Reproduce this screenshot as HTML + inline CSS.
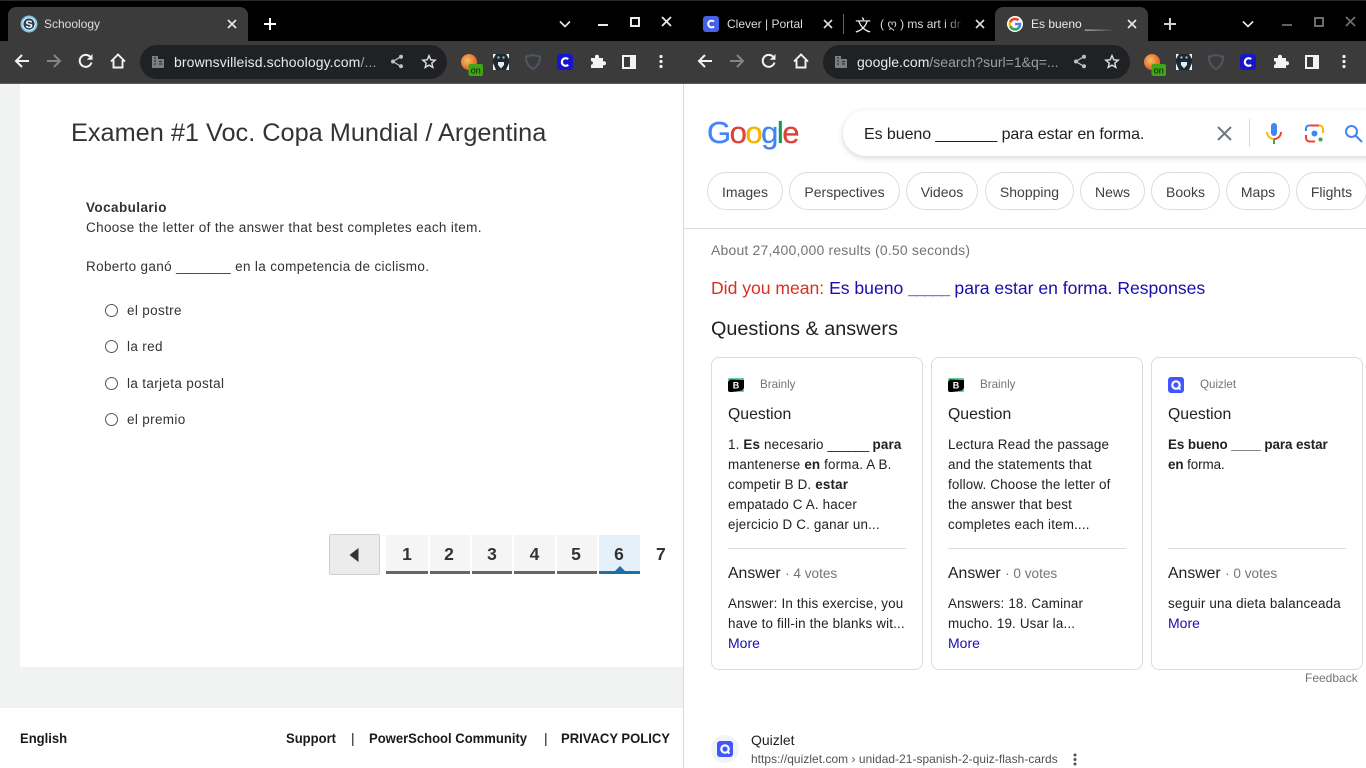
<!DOCTYPE html>
<html><head><meta charset="utf-8"><title>Schoology</title>
<style>
html,body{margin:0;padding:0;width:1366px;height:768px;overflow:hidden;background:#fff;font-family:"Liberation Sans",sans-serif}
.a{position:absolute;white-space:nowrap}
.box{position:absolute}
svg{position:absolute;overflow:visible}
.tt{color:#dadce0;font-size:12px;line-height:16px}
.url{font-size:14px;line-height:18px;color:#9aa0a6}
.nb{position:absolute;top:535px;height:36px;background:#f5f5f5;font:bold 17.5px/38px "Liberation Sans",sans-serif;color:#333;text-align:center;border-bottom:3px solid #666}
.chip{position:absolute;top:172px;height:38px;border:1px solid #dadce0;border-radius:20px;box-sizing:border-box;font-size:14px;line-height:38px;text-align:center;color:#3c4043;background:#fff}
.card{position:absolute;top:357px;height:313px;width:212px;border:1px solid #dadce0;border-radius:8px;box-sizing:border-box;background:#fff}
.ct{font-size:13.4px;line-height:20px;color:#202124;letter-spacing:.17px}
.q{font-size:15.8px;line-height:20px;color:#202124}
.v{font-size:13.6px;color:#70757a}
.m{color:#1a0dab;font-size:14px;letter-spacing:0;position:relative;top:-1px}
.u{letter-spacing:-.6px}
.rad{position:absolute;left:105px;width:11px;height:11px;border:1px solid #555;border-radius:50%;background:#fff}
.opt{font-size:13.5px;line-height:18px;color:#333;left:127px;letter-spacing:.34px}
.ft{font-weight:bold;font-size:14px;line-height:18px;color:#1a1a1a;top:729px;transform-origin:left center;transform:scaleX(.932)}
</style></head><body>

<!-- ================ LEFT CHROME ================ -->
<div class="box" style="left:0;top:0;width:684px;height:41px;background:#000"></div>
<div class="box" style="left:0;top:0;width:1366px;height:1px;background:#2a2a2a"></div>
<div class="box" style="left:0;top:41px;width:684px;height:42px;background:#3b3b3b"></div>
<div class="box" style="left:0;top:83px;width:684px;height:1px;background:#5c5c5c"></div>
<div class="box" style="left:8px;top:7px;width:240px;height:34px;background:#3b3b3b;border-radius:8px 8px 0 0"></div>
<svg style="left:20px;top:15px" width="18" height="18" viewBox="0 0 18 18"><circle cx="9" cy="9" r="7.5" fill="#fff" stroke="#7cc5e8" stroke-width="2"/><circle cx="9" cy="9" r="5.6" fill="#2c3e50"/><text x="9" y="13" font-family="Liberation Sans" font-size="11" font-weight="bold" fill="#fff" text-anchor="middle">S</text></svg>
<div class="a tt" style="left:44px;top:16px">Schoology</div>
<svg style="left:227px;top:19px" width="10" height="10"><path d="M1 1L9 9M9 1L1 9" stroke="#e8eaed" stroke-width="1.6"/></svg>
<svg style="left:263px;top:17px" width="14" height="14"><path d="M7 1V13M1 7H13" stroke="#fff" stroke-width="2"/></svg>
<svg style="left:559px;top:20px" width="12" height="8"><path d="M1 1.5L6 6.5L11 1.5" fill="none" stroke="#e8eaed" stroke-width="1.6"/></svg>
<div class="box" style="left:598px;top:24px;width:10px;height:2px;background:#e8eaed"></div>
<div class="box" style="left:630px;top:17px;width:6px;height:6px;border:2px solid #e8eaed"></div>
<svg style="left:661px;top:16px" width="11" height="11"><path d="M1 1L10 10M10 1L1 10" stroke="#e8eaed" stroke-width="1.8"/></svg>

<svg style="left:14px;top:53px" width="16" height="16" viewBox="0 0 16 16"><path d="M15 8H2M8 2L2 8L8 14" fill="none" stroke="#f1f3f4" stroke-width="2"/></svg>
<svg style="left:46px;top:53px" width="16" height="16" viewBox="0 0 16 16"><path d="M1 8H14M8 2L14 8L8 14" fill="none" stroke="#80868b" stroke-width="2"/></svg>
<svg style="left:78px;top:53px" width="16" height="16" viewBox="0 0 16 16"><path d="M13.5 9.5A6 6 0 1 1 12 3.6" fill="none" stroke="#f1f3f4" stroke-width="2"/><path d="M14.5 1V6.8H8.8Z" fill="#f1f3f4"/></svg>
<svg style="left:110px;top:53px" width="16" height="16" viewBox="0 0 16 16"><path d="M1 8.5L8 1.5L15 8.5M3.5 7V14.5H12.5V7" fill="none" stroke="#f1f3f4" stroke-width="1.9"/></svg>

<div class="box" style="left:140px;top:45px;width:307px;height:34px;border-radius:17px;background:#202124"></div>
<svg style="left:151px;top:55px" width="14" height="14" viewBox="0 0 14 14"><path d="M1 1H7V4H13V13H1Z" fill="#9aa0a6" opacity=".75"/><path d="M3 3H5M3 6H5M3 9H5M8 6.5H11M8 9H11" stroke="#303134" stroke-width="1.3"/></svg>
<div class="a url" style="left:174px;top:53px;color:#e8eaed;letter-spacing:.11px">brownsvilleisd.schoology.com<span style="color:#9aa0a6">/...</span></div>
<svg style="left:390px;top:54px" width="14" height="15" viewBox="0 0 14 15"><path d="M11 2.5L3 7.5L11 12.5" fill="none" stroke="#bdc1c6" stroke-width="1.3"/><circle cx="11" cy="2.7" r="2" fill="#bdc1c6"/><circle cx="3" cy="7.5" r="2" fill="#bdc1c6"/><circle cx="11" cy="12.3" r="2" fill="#bdc1c6"/></svg>
<svg style="left:421px;top:54px" width="16" height="15" viewBox="0 0 16 15"><path d="M8 1.6L9.8 5.8L14.2 6.2L10.8 9.1L11.8 13.4L8 11.1L4.2 13.4L5.2 9.1L1.8 6.2L6.2 5.8Z" fill="none" stroke="#e0e0e0" stroke-width="1.4"/></svg>

<svg style="left:461px;top:54px" width="24" height="22" viewBox="0 0 24 22"><defs><radialGradient id="o1" cx=".4" cy=".4"><stop offset="0" stop-color="#f8c060"/><stop offset="1" stop-color="#e27030"/></radialGradient></defs><circle cx="8" cy="8" r="8" fill="url(#o1)"/><rect x="7.5" y="10" width="14.5" height="12" rx="2" fill="#3fa614"/><text x="14.7" y="19.5" font-family="Liberation Sans" font-size="9" fill="#111" text-anchor="middle">on</text></svg>
<svg style="left:493px;top:54px" width="16" height="16" viewBox="0 0 16 16"><rect width="16" height="16" fill="#1c2a33"/><path d="M0 0H3L0 5ZM16 0H13L16 5ZM0 9L3 16H0ZM16 9L13 16H16Z" fill="#ecf0f1"/><circle cx="5.5" cy="3.5" r="1.2" fill="#9fb0b8"/><circle cx="10.5" cy="3.5" r="1.2" fill="#9fb0b8"/><path d="M5 8H11V11L8 14.5L5 11Z" fill="#e8ecee"/></svg>
<svg style="left:525px;top:54px" width="16" height="16" viewBox="0 0 16 16"><path d="M1 2.5L8 1L15 2.5C15 9 12 13 8 15C4 13 1 9 1 2.5Z" fill="none" stroke="#4e5663" stroke-width="2"/></svg>
<svg style="left:557px;top:54px" width="16" height="16" viewBox="0 0 16 16"><rect width="16" height="16" rx="3" fill="#1616cc"/><path d="M11.2 5.2A3.8 3.8 0 1 0 11.2 10.8" fill="none" stroke="#fff" stroke-width="2.2"/></svg>
<svg style="left:590px;top:54px" width="15" height="15" viewBox="0 0 15 15"><path d="M1 4H5V2.8A2 2 0 0 1 9 2.8V4H13V7.2H14A2 2 0 0 1 14 11.2H13V14H1V10.6H2A2 2 0 0 0 2 7.2H1Z" fill="#f1f3f4"/></svg>
<svg style="left:622px;top:55px" width="14" height="14" viewBox="0 0 14 14"><rect width="14" height="14" fill="#f1f3f4"/><rect x="2" y="2" width="6" height="10" fill="#3b3b3b"/></svg>
<svg style="left:659px;top:54px" width="4" height="15"><circle cx="2" cy="2.5" r="1.6" fill="#f1f3f4"/><circle cx="2" cy="7.5" r="1.6" fill="#f1f3f4"/><circle cx="2" cy="12.5" r="1.6" fill="#f1f3f4"/></svg>

<!-- ================ LEFT PAGE ================ -->
<div class="box" style="left:0;top:84px;width:683px;height:624px;background:#f1f3f2"></div>
<div class="box" style="left:20px;top:84px;width:663px;height:583px;background:#fff"></div>
<div class="box" style="left:0;top:708px;width:683px;height:60px;background:#fff"></div>
<div class="box" style="left:683px;top:84px;width:1px;height:684px;background:#d8d8d8"></div>

<div class="a" style="left:71px;top:117px;font-size:25.3px;line-height:32px;color:#333">Examen #1 Voc. Copa Mundial / Argentina</div>
<div class="a" style="left:86px;top:199px;font-size:13.5px;line-height:17px;font-weight:bold;color:#333;letter-spacing:.42px">Vocabulario</div>
<div class="a" style="left:86px;top:219px;font-size:13.5px;line-height:17px;color:#333;letter-spacing:.345px">Choose the letter of the answer that best completes each item.</div>
<div class="a" style="left:86px;top:258px;font-size:13.5px;line-height:17px;color:#333;letter-spacing:.345px">Roberto ganó _______ en la competencia de ciclismo.</div>
<div class="rad" style="top:304px"></div><div class="a opt" style="top:302px">el postre</div>
<div class="rad" style="top:340px"></div><div class="a opt" style="top:338px">la red</div>
<div class="rad" style="top:377px"></div><div class="a opt" style="top:375px">la tarjeta postal</div>
<div class="rad" style="top:413px"></div><div class="a opt" style="top:411px">el premio</div>

<div class="box" style="left:329px;top:534px;width:49px;height:39px;background:#ececec;border:1px solid #cfcfcf;border-radius:2px"></div>
<svg style="left:349px;top:548px" width="10" height="14"><path d="M9.5 0V14L0.5 7Z" fill="#333"/></svg>
<div class="nb" style="left:386px;width:42px">1</div>
<div class="nb" style="left:430px;width:40px;text-indent:-2px">2</div>
<div class="nb" style="left:472px;width:40px">3</div>
<div class="nb" style="left:514px;width:41px">4</div>
<div class="nb" style="left:557px;width:40px;text-indent:-2px">5</div>
<div class="nb" style="left:599px;width:41px;background:#e4f1fb;border-bottom-color:#1f6fa5;text-indent:-1px">6</div>
<svg style="left:614px;top:566px" width="12" height="6"><path d="M0 6L6 0L12 6Z" fill="#1f6fa5"/></svg>
<div class="a" style="left:656px;top:545px;font:bold 17.5px/19px 'Liberation Sans',sans-serif;color:#333">7</div>

<div class="a ft" style="left:20px">English</div>
<div class="a ft" style="left:286px">Support</div>
<div class="a" style="left:351px;top:729px;font-size:14px;line-height:18px;color:#1a1a1a">|</div>
<div class="a ft" style="left:369px">PowerSchool Community</div>
<div class="a" style="left:544px;top:729px;font-size:14px;line-height:18px;color:#1a1a1a">|</div>
<div class="a ft" style="left:561px">PRIVACY POLICY</div>

<!-- ================ RIGHT CHROME ================ -->
<div class="box" style="left:684px;top:1px;width:682px;height:40px;background:#000"></div>
<div class="box" style="left:684px;top:41px;width:682px;height:42px;background:#3b3b3b"></div>
<div class="box" style="left:684px;top:83px;width:682px;height:1px;background:#5c5c5c"></div>
<div class="box" style="left:995px;top:7px;width:153px;height:34px;background:#3b3b3b;border-radius:8px 8px 0 0"></div>

<svg style="left:703px;top:16px" width="16" height="16"><rect width="16" height="16" rx="3" fill="#4661e8"/><path d="M11 5.6A3.4 3.4 0 1 0 11 10.4" fill="none" stroke="#fff" stroke-width="2"/></svg>
<div class="a tt" style="left:727px;top:16px">Clever | Portal</div>
<svg style="left:823px;top:19px" width="10" height="10"><path d="M1 1L9 9M9 1L1 9" stroke="#dadce0" stroke-width="1.6"/></svg>
<div class="box" style="left:843px;top:14px;width:1px;height:20px;background:#5f6368"></div>
<div class="a" style="left:855px;top:14px;font:16px/20px 'Noto Sans CJK SC',sans-serif;color:#f1f3f4">文</div>
<div class="a tt" style="left:880px;top:16px;width:86px;overflow:hidden;-webkit-mask-image:linear-gradient(90deg,#000 75%,transparent)">( ღ ) ms art i dr</div>
<svg style="left:975px;top:19px" width="10" height="10"><path d="M1 1L9 9M9 1L1 9" stroke="#dadce0" stroke-width="1.6"/></svg>

<svg style="left:1007px;top:16px" width="16" height="16" viewBox="0 0 48 48"><circle cx="24" cy="24" r="24" fill="#fff"/><path d="M43 24.4c0-1.4-.1-2.8-.4-4.1H24v7.8h10.7a9 9 0 0 1-4 6v5h6.4c3.7-3.5 5.9-8.6 5.9-14.7z" fill="#4285f4"/><path d="M24 44c5.4 0 9.9-1.8 13.1-4.8l-6.4-5c-1.8 1.2-4 1.9-6.7 1.9-5.1 0-9.5-3.5-11-8.2H6.4v5.1C9.7 39.500 16.300 44 24 44z" fill="#34a853"/><path d="M13 27.900c-.8-2.400-.8-5 0-7.400v-5.100H6.400a20 20 0 0 0 0 17.600z" fill="#fbbc05"/><path d="M24 12.900c2.900 0 5.500 1 7.500 2.900l5.700-5.700C33.900 7 29.400 5 24 5 16.300 5 9.700 9.500 6.400 15.400l6.600 5.100c1.500-4.600 5.900-7.600 11-7.600z" fill="#ea4335"/></svg>
<div class="a tt" style="left:1031px;top:16px;color:#e8eaed;width:84px;overflow:hidden;-webkit-mask-image:linear-gradient(90deg,#000 70%,transparent)">Es bueno _______</div>
<svg style="left:1127px;top:19px" width="10" height="10"><path d="M1 1L9 9M9 1L1 9" stroke="#e8eaed" stroke-width="1.6"/></svg>
<svg style="left:1163px;top:17px" width="14" height="14"><path d="M7 1V13M1 7H13" stroke="#d0d0d0" stroke-width="2"/></svg>
<svg style="left:1242px;top:20px" width="12" height="8"><path d="M1 1.5L6 6.5L11 1.5" fill="none" stroke="#e8eaed" stroke-width="1.6"/></svg>
<div class="box" style="left:1282px;top:24px;width:10px;height:2px;background:#5f6368"></div>
<div class="box" style="left:1314px;top:17px;width:6px;height:6px;border:2px solid #6a6e72"></div>
<svg style="left:1345px;top:16px" width="11" height="11"><path d="M1 1L10 10M10 1L1 10" stroke="#6a6e72" stroke-width="1.8"/></svg>

<svg style="left:697px;top:53px" width="16" height="16" viewBox="0 0 16 16"><path d="M15 8H2M8 2L2 8L8 14" fill="none" stroke="#f1f3f4" stroke-width="2"/></svg>
<svg style="left:729px;top:53px" width="16" height="16" viewBox="0 0 16 16"><path d="M1 8H14M8 2L14 8L8 14" fill="none" stroke="#80868b" stroke-width="2"/></svg>
<svg style="left:761px;top:53px" width="16" height="16" viewBox="0 0 16 16"><path d="M13.5 9.5A6 6 0 1 1 12 3.6" fill="none" stroke="#f1f3f4" stroke-width="2"/><path d="M14.5 1V6.8H8.8Z" fill="#f1f3f4"/></svg>
<svg style="left:793px;top:53px" width="16" height="16" viewBox="0 0 16 16"><path d="M1 8.5L8 1.5L15 8.5M3.5 7V14.5H12.5V7" fill="none" stroke="#f1f3f4" stroke-width="1.9"/></svg>

<div class="box" style="left:823px;top:45px;width:307px;height:34px;border-radius:17px;background:#202124"></div>
<svg style="left:834px;top:55px" width="14" height="14" viewBox="0 0 14 14"><path d="M1 1H7V4H13V13H1Z" fill="#9aa0a6" opacity=".75"/><path d="M3 3H5M3 6H5M3 9H5M8 6.5H11M8 9H11" stroke="#303134" stroke-width="1.3"/></svg>
<div class="a url" style="left:857px;top:53px;color:#e8eaed">google.com<span style="color:#9aa0a6">/search?surl=1&amp;q=...</span></div>
<svg style="left:1073px;top:54px" width="14" height="15" viewBox="0 0 14 15"><path d="M11 2.5L3 7.5L11 12.5" fill="none" stroke="#bdc1c6" stroke-width="1.3"/><circle cx="11" cy="2.7" r="2" fill="#bdc1c6"/><circle cx="3" cy="7.5" r="2" fill="#bdc1c6"/><circle cx="11" cy="12.3" r="2" fill="#bdc1c6"/></svg>
<svg style="left:1104px;top:54px" width="16" height="15" viewBox="0 0 16 15"><path d="M8 1.6L9.8 5.8L14.2 6.2L10.8 9.1L11.8 13.4L8 11.1L4.2 13.4L5.2 9.1L1.8 6.2L6.2 5.8Z" fill="none" stroke="#e0e0e0" stroke-width="1.4"/></svg>

<svg style="left:1144px;top:54px" width="24" height="22" viewBox="0 0 24 22"><defs><radialGradient id="o2" cx=".4" cy=".4"><stop offset="0" stop-color="#f8c060"/><stop offset="1" stop-color="#e27030"/></radialGradient></defs><circle cx="8" cy="8" r="8" fill="url(#o2)"/><rect x="7.5" y="10" width="14.5" height="12" rx="2" fill="#3fa614"/><text x="14.7" y="19.5" font-family="Liberation Sans" font-size="9" fill="#111" text-anchor="middle">on</text></svg>
<svg style="left:1176px;top:54px" width="16" height="16" viewBox="0 0 16 16"><rect width="16" height="16" fill="#1c2a33"/><path d="M0 0H3L0 5ZM16 0H13L16 5ZM0 9L3 16H0ZM16 9L13 16H16Z" fill="#ecf0f1"/><circle cx="5.5" cy="3.5" r="1.2" fill="#9fb0b8"/><circle cx="10.5" cy="3.5" r="1.2" fill="#9fb0b8"/><path d="M5 8H11V11L8 14.5L5 11Z" fill="#e8ecee"/></svg>
<svg style="left:1208px;top:54px" width="16" height="16" viewBox="0 0 16 16"><path d="M1 2.5L8 1L15 2.5C15 9 12 13 8 15C4 13 1 9 1 2.5Z" fill="none" stroke="#4e5663" stroke-width="2"/></svg>
<svg style="left:1240px;top:54px" width="16" height="16" viewBox="0 0 16 16"><rect width="16" height="16" rx="3" fill="#1616cc"/><path d="M11.2 5.2A3.8 3.8 0 1 0 11.2 10.8" fill="none" stroke="#fff" stroke-width="2.2"/></svg>
<svg style="left:1273px;top:54px" width="15" height="15" viewBox="0 0 15 15"><path d="M1 4H5V2.8A2 2 0 0 1 9 2.8V4H13V7.2H14A2 2 0 0 1 14 11.2H13V14H1V10.6H2A2 2 0 0 0 2 7.2H1Z" fill="#f1f3f4"/></svg>
<svg style="left:1305px;top:55px" width="14" height="14" viewBox="0 0 14 14"><rect width="14" height="14" fill="#f1f3f4"/><rect x="2" y="2" width="6" height="10" fill="#3b3b3b"/></svg>
<svg style="left:1342px;top:54px" width="4" height="15"><circle cx="2" cy="2.5" r="1.6" fill="#f1f3f4"/><circle cx="2" cy="7.5" r="1.6" fill="#f1f3f4"/><circle cx="2" cy="12.5" r="1.6" fill="#f1f3f4"/></svg>

<!-- ================ GOOGLE ================ -->
<div class="a" style="left:707px;top:113px;font-size:31px;line-height:40px;letter-spacing:-1.5px;-webkit-text-stroke:.3px"><span style="color:#4285f4">G</span><span style="color:#db4437">o</span><span style="color:#f4b400">o</span><span style="color:#4285f4">g</span><span style="color:#0f9d58">l</span><span style="color:#db4437">e</span></div>

<div class="box" style="left:843px;top:110px;width:560px;height:46px;border-radius:23px;background:#fff;box-shadow:0 2px 5px 1px rgba(64,60,67,.16)"></div>
<div class="a" style="left:864px;top:125px;font-size:16px;line-height:19px;color:#202124;letter-spacing:-.07px">Es bueno _______ para estar en forma.</div>
<svg style="left:1217px;top:126px" width="15" height="15"><path d="M1 1L14 14M14 1L1 14" stroke="#70757a" stroke-width="2"/></svg>
<div class="box" style="left:1249px;top:119px;width:1px;height:28px;background:#dadce0"></div>
<svg style="left:1266px;top:123px" width="16" height="21" viewBox="0 0 16 21"><rect x="5" y="0" width="6" height="13" rx="3" fill="#4285f4"/><path d="M1 9A7 7 0 0 0 8 16" fill="none" stroke="#fbbc04" stroke-width="2"/><path d="M8 16A7 7 0 0 0 15 9" fill="none" stroke="#ea4335" stroke-width="2"/><path d="M8 16V21" stroke="#34a853" stroke-width="2"/></svg>
<svg style="left:1305px;top:124px" width="19" height="19" viewBox="0 0 19 19"><circle cx="9.5" cy="9.5" r="3" fill="#4285f4"/><path d="M5 1.5H4A3 3 0 0 0 1 4.5V7" fill="none" stroke="#4285f4" stroke-width="2"/><path d="M1 11V14A3.5 3.5 0 0 0 4.5 17.5H10" fill="none" stroke="#ea4335" stroke-width="2"/><path d="M5 1.5H14" stroke="#ea4335" stroke-width="2"/><path d="M14 1.5A3.5 3.5 0 0 1 18 5V9" fill="none" stroke="#fbbc04" stroke-width="2"/><circle cx="15.5" cy="15.5" r="2" fill="#34a853"/></svg>
<svg style="left:1344px;top:124px" width="19" height="19" viewBox="0 0 19 19"><circle cx="7.5" cy="7.5" r="5.5" fill="none" stroke="#4285f4" stroke-width="2"/><path d="M11.5 11.5L18 18" stroke="#4285f4" stroke-width="2"/></svg>

<div class="chip" style="left:707px;width:76px">Images</div>
<div class="chip" style="left:789px;width:111px">Perspectives</div>
<div class="chip" style="left:906px;width:72px">Videos</div>
<div class="chip" style="left:985px;width:89px">Shopping</div>
<div class="chip" style="left:1080px;width:65px">News</div>
<div class="chip" style="left:1151px;width:69px">Books</div>
<div class="chip" style="left:1226px;width:64px">Maps</div>
<div class="chip" style="left:1296px;width:71px">Flights</div>
<div class="box" style="left:684px;top:228px;width:682px;height:1px;background:#dadce0"></div>

<div class="a" style="left:711px;top:242px;font-size:14px;line-height:17px;color:#70757a;letter-spacing:.18px">About 27,400,000 results (0.50 seconds)</div>
<div class="a" style="left:711px;top:277px;font-size:17.6px;line-height:22px;color:#d93025;letter-spacing:-.02px">Did you mean: <span style="color:#1a0dab">Es bueno <b style="letter-spacing:-1.7px;margin-right:1px">_____</b> para estar en forma. Responses</span></div>
<div class="a" style="left:711px;top:317px;font-size:19.8px;line-height:24px;color:#202124">Questions &amp; answers</div>

<!-- cards -->
<div class="card" style="left:711px"></div>
<div class="card" style="left:931px"></div>
<div class="card" style="left:1151px"></div>

<svg style="left:728px;top:377px" width="16" height="16" viewBox="0 0 16 16"><rect y="1" width="16" height="14" rx="2" fill="#000"/><path d="M0 5V3A2 2 0 0 1 2 1H16V3L2 2.5Z" fill="#60d399"/><path d="M16 11V13A2 2 0 0 1 14 15H4L14 13.5Z" fill="#60d399"/><text x="8" y="11.5" font-family="Liberation Sans" font-weight="bold" font-size="9" fill="#fff" text-anchor="middle">B</text></svg>
<div class="a" style="left:760px;top:377px;font-size:11.6px;line-height:15px;color:#70757a">Brainly</div>
<div class="a q" style="left:728px;top:405px">Question</div>
<div class="a ct" style="left:728px;top:435px">1. <b>Es</b> necesario <span class="u">______</span> <b>para</b><br>mantenerse <b>en</b> forma. A B.<br>competir B D. <b>estar</b><br>empatado C A. hacer<br>ejercicio D C. ganar un...</div>
<div class="box" style="left:728px;top:548px;width:178px;height:1px;background:#dadce0"></div>
<div class="a q" style="left:728px;top:564px">Answer <span class="v">· 4 votes</span></div>
<div class="a ct" style="left:728px;top:594px">Answer: In this exercise, you<br>have to fill-in the blanks wit...<br><span class="m">More</span></div>

<svg style="left:948px;top:377px" width="16" height="16" viewBox="0 0 16 16"><rect y="1" width="16" height="14" rx="2" fill="#000"/><path d="M0 5V3A2 2 0 0 1 2 1H16V3L2 2.5Z" fill="#60d399"/><path d="M16 11V13A2 2 0 0 1 14 15H4L14 13.5Z" fill="#60d399"/><text x="8" y="11.5" font-family="Liberation Sans" font-weight="bold" font-size="9" fill="#fff" text-anchor="middle">B</text></svg>
<div class="a" style="left:980px;top:377px;font-size:11.6px;line-height:15px;color:#70757a">Brainly</div>
<div class="a q" style="left:948px;top:405px">Question</div>
<div class="a ct" style="left:948px;top:435px">Lectura Read the passage<br>and the statements that<br>follow. Choose the letter of<br>the answer that best<br>completes each item....</div>
<div class="box" style="left:948px;top:548px;width:178px;height:1px;background:#dadce0"></div>
<div class="a q" style="left:948px;top:564px">Answer <span class="v">· 0 votes</span></div>
<div class="a ct" style="left:948px;top:594px">Answers: 18. Caminar<br>mucho. 19. Usar la...<br><span class="m">More</span></div>

<svg style="left:1168px;top:377px" width="16" height="16" viewBox="0 0 16 16"><rect width="16" height="16" rx="3" fill="#4255ff"/><circle cx="8" cy="8" r="3.7" fill="none" stroke="#fff" stroke-width="2.2"/><path d="M10 10.5L12.5 12.500" stroke="#fff" stroke-width="2"/></svg>
<div class="a" style="left:1200px;top:377px;font-size:11.6px;line-height:15px;color:#70757a">Quizlet</div>
<div class="a q" style="left:1168px;top:405px">Question</div>
<div class="a ct" style="left:1168px;top:435px;letter-spacing:-.08px"><b>Es bueno ____ para estar</b><br><b>en</b> forma.</div>
<div class="box" style="left:1168px;top:548px;width:178px;height:1px;background:#dadce0"></div>
<div class="a q" style="left:1168px;top:564px">Answer <span class="v">· 0 votes</span></div>
<div class="a ct" style="left:1168px;top:594px">seguir una dieta balanceada<br><span class="m">More</span></div>

<div class="a" style="left:1305px;top:671px;font-size:12px;line-height:15px;color:#70757a">Feedback</div>

<svg style="left:711px;top:735px" width="28" height="28" viewBox="0 0 28 28"><circle cx="14" cy="14" r="14" fill="#f1f3f4"/><rect x="6" y="6" width="16" height="16" rx="3" fill="#4255ff"/><circle cx="14" cy="14" r="3.7" fill="none" stroke="#fff" stroke-width="2.2"/><path d="M16 16.5L18.5 18.5" stroke="#fff" stroke-width="2"/></svg>
<div class="a" style="left:751px;top:731px;font-size:14px;line-height:18px;color:#202124">Quizlet</div>
<div class="a" style="left:751px;top:752px;font-size:11.9px;line-height:15px;color:#4d5156;letter-spacing:.07px">https://quizlet.com › unidad-21-spanish-2-quiz-flash-cards</div>
<svg style="left:1073px;top:753px" width="4" height="13"><circle cx="2" cy="2" r="1.5" fill="#4d5156"/><circle cx="2" cy="6.5" r="1.5" fill="#4d5156"/><circle cx="2" cy="11" r="1.5" fill="#4d5156"/></svg>
</body></html>
